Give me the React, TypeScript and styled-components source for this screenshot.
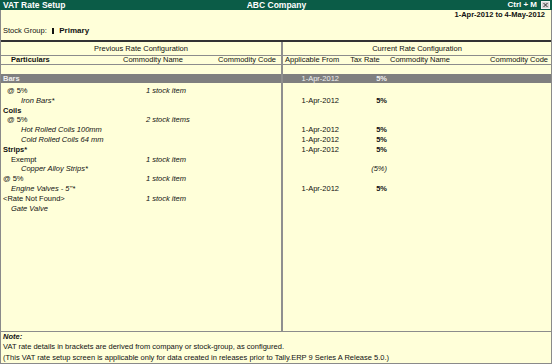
import styled, { createGlobalStyle } from 'styled-components';

const GlobalStyle = createGlobalStyle`
  html, body {
    margin: 0;
    padding: 0;
    background: #ffffd9;
  }
  body {
    font-family: "Liberation Sans", Arial, sans-serif;
  }
`;

const Window = styled.div`
  width: 552px;
  height: 364px;
  display: flex;
  flex-direction: column;
  background: #ffffd9;
  color: #111;
  font-size: 7.5px;
  overflow: hidden;
`;

const TitleBar = styled.div`
  height: 10px;
  flex: none;
  display: grid;
  grid-template-columns: 1fr auto 1fr;
  align-items: center;
  background: #0b5c47;
  color: #fff;
  font-weight: bold;
  font-size: 8.5px;
  line-height: 10px;
  padding: 0 2px 0 3px;
`;

const TitleRight = styled.div`
  display: flex;
  justify-content: flex-end;
  align-items: center;
  gap: 4px;
  font-size: 8px;
`;

const Frame = styled.div`
  flex: 1;
  display: flex;
  flex-direction: column;
  border-left: 1px solid #8a8a8a;
  border-right: 1px solid #8a8a8a;
  border-bottom: 1px solid #8a8a8a;
  min-height: 0;
`;

const Info = styled.div`
  height: 30px;
  flex: none;
  padding: 0 6px 0 2px;
`;

const DateLine = styled.div`
  height: 10px;
  line-height: 10px;
  text-align: right;
  font-weight: bold;
`;

const StockLine = styled.div`
  margin-top: 6px;
  line-height: 10px;
  display: flex;
  align-items: center;
`;

const Marker = styled.span`
  display: inline-block;
  width: 2.5px;
  height: 6px;
  background: #111;
  margin: 0 5px 0 5px;
`;

const Bold = styled.b<{ $size?: number }>`
  font-weight: bold;
  ${(p) => (p.$size ? `font-size: ${p.$size}px;` : '')}
`;

const Table = styled.div`
  flex: 1;
  display: flex;
  border-top: 2px solid #333;
  min-height: 0;
`;

const Panel = styled.div<{ $left?: boolean }>`
  display: flex;
  flex-direction: column;
  ${(p) => (p.$left ? 'width: 280px; border-right: 2px solid #8f8f8f;' : 'flex: 1;')}
`;

const PanelHead = styled.div`
  height: 13px;
  line-height: 13px;
  text-align: center;
  border-bottom: 1px solid #8c8c8c;
`;

const Grid = styled.div<{ $cols: string }>`
  display: grid;
  grid-template-columns: ${(p) => p.$cols};
  white-space: nowrap;
`;

const ColHead = styled(Grid)`
  height: 8px;
  line-height: 8px;
  border-bottom: 1px solid #8c8c8c;
  margin-bottom: 9px;
`;

const Cell = styled.div<{ $align?: 'left' | 'right' | 'center'; $pad?: number; $padR?: number }>`
  text-align: ${(p) => p.$align ?? 'left'};
  padding-left: ${(p) => p.$pad ?? 0}px;
  padding-right: ${(p) => p.$padR ?? 0}px;
  overflow: visible;
`;

const Row = styled(Grid)<{ $active?: boolean }>`
  height: ${(p) => (p.$active ? 9 : 9.8)}px;
  line-height: ${(p) => (p.$active ? 9 : 9.8)}px;
  margin-bottom: ${(p) => (p.$active ? 3 : 0)}px;
  background: ${(p) => (p.$active ? '#7f7f7f' : 'transparent')};
  color: ${(p) => (p.$active ? '#efefef' : '#111')};
`;

const Label = styled.span<{ $kind: Kind }>`
  font-weight: ${(p) => (p.$kind === 'group' ? 'bold' : 'normal')};
  font-style: ${(p) => (p.$kind === 'item' ? 'italic' : 'normal')};
`;

const Italic = styled.span`
  font-style: italic;
`;

const Rate = styled.span<{ $derived?: boolean }>`
  font-weight: ${(p) => (p.$derived ? 'normal' : 'bold')};
  font-style: ${(p) => (p.$derived ? 'italic' : 'normal')};
`;

const Note = styled.div`
  flex: none;
  border-top: 1px solid #8c8c8c;
  padding: 0 2px;
  line-height: 10.5px;
`;

const NoteTitle = styled.div`
  font-weight: bold;
  font-style: italic;
`;

type Kind = 'group' | 'rate' | 'item';

type Line = {
  label: string;
  indent: number;
  kind: Kind;
  count?: string;
  from?: string;
  rate?: string;
  derived?: boolean;
  active?: boolean;
};

const FROM = '1-Apr-2012';

const lines: Line[] = [
  { label: 'Bars', indent: 2, kind: 'group', from: FROM, rate: '5%', active: true },
  { label: '@ 5%', indent: 6, kind: 'rate', count: '1 stock item' },
  { label: 'Iron Bars*', indent: 20, kind: 'item', from: FROM, rate: '5%' },
  { label: 'Coils', indent: 2, kind: 'group' },
  { label: '@ 5%', indent: 6, kind: 'rate', count: '2 stock items' },
  { label: 'Hot Rolled Coils 100mm', indent: 20, kind: 'item', from: FROM, rate: '5%' },
  { label: 'Cold Rolled Coils 64 mm', indent: 20, kind: 'item', from: FROM, rate: '5%' },
  { label: 'Strips*', indent: 2, kind: 'group', from: FROM, rate: '5%' },
  { label: 'Exempt', indent: 10, kind: 'rate', count: '1 stock item' },
  { label: 'Copper Alloy Strips*', indent: 20, kind: 'item', rate: '(5%)', derived: true },
  { label: '@ 5%', indent: 2, kind: 'rate', count: '1 stock item' },
  { label: 'Engine Valves - 5"*', indent: 10, kind: 'item', from: FROM, rate: '5%' },
  { label: '<Rate Not Found>', indent: 2, kind: 'rate', count: '1 stock item' },
  { label: 'Gate Valve', indent: 10, kind: 'item' },
];

const LEFT_HEAD = '119px 63px 1fr';
const LEFT_BODY = '145px 1fr';
const RIGHT_HEAD = '58px 48px 96px 1fr';
const RIGHT_BODY = '56px 49px 1fr';

function CloseBox() {
  return (
    <svg width="9" height="8" viewBox="0 0 9 8">
      <rect x="0.5" y="0.5" width="8" height="7" fill="#d6d6d6" stroke="#f4f4f4" />
      <path d="M2.5 2 L6.5 6 M6.5 2 L2.5 6" stroke="#333" strokeWidth="1" />
    </svg>
  );
}

export default function App() {
  return (
    <>
      <GlobalStyle />
      <Window>
        <TitleBar>
          <span>VAT Rate Setup</span>
          <span>ABC Company</span>
          <TitleRight>
            <span>Ctrl + M</span>
            <CloseBox />
          </TitleRight>
        </TitleBar>
        <Frame>
          <Info>
            <DateLine>1-Apr-2012 to 4-May-2012</DateLine>
            <StockLine>
              Stock Group:
              <Marker />
              <Bold $size={8}>Primary</Bold>
            </StockLine>
          </Info>
          <Table>
            <Panel $left>
              <PanelHead>Previous Rate Configuration</PanelHead>
              <ColHead $cols={LEFT_HEAD}>
                <Cell $pad={10}>
                  <Bold>Particulars</Bold>
                </Cell>
                <Cell $align="right">Commodity Name</Cell>
                <Cell $align="right" $padR={5}>
                  Commodity Code
                </Cell>
              </ColHead>
              {lines.map((l, i) => (
                <Row key={i} $cols={LEFT_BODY} $active={l.active}>
                  <Cell $pad={l.indent}>
                    <Label $kind={l.kind}>{l.label}</Label>
                  </Cell>
                  <Cell>{l.count && <Italic>{l.count}</Italic>}</Cell>
                </Row>
              ))}
            </Panel>
            <Panel>
              <PanelHead>Current Rate Configuration</PanelHead>
              <ColHead $cols={RIGHT_HEAD}>
                <Cell $pad={2}>Applicable From</Cell>
                <Cell $align="center">Tax Rate</Cell>
                <Cell $pad={1}>Commodity Name</Cell>
                <Cell $align="right" $padR={3}>
                  Commodity Code
                </Cell>
              </ColHead>
              {lines.map((l, i) => (
                <Row key={i} $cols={RIGHT_BODY} $active={l.active}>
                  <Cell $align="right">{l.from}</Cell>
                  <Cell $align="right" $padR={1}>
                    {l.rate && <Rate $derived={l.derived}>{l.rate}</Rate>}
                  </Cell>
                  <Cell />
                </Row>
              ))}
            </Panel>
          </Table>
          <Note>
            <NoteTitle>Note:</NoteTitle>
            <div>VAT rate details in brackets are derived from company or stock-group, as configured.</div>
            <div>
              (This VAT rate setup screen is applicable only for data created in releases prior to Tally.ERP 9
              Series A Release 5.0.)
            </div>
          </Note>
        </Frame>
      </Window>
    </>
  );
}
